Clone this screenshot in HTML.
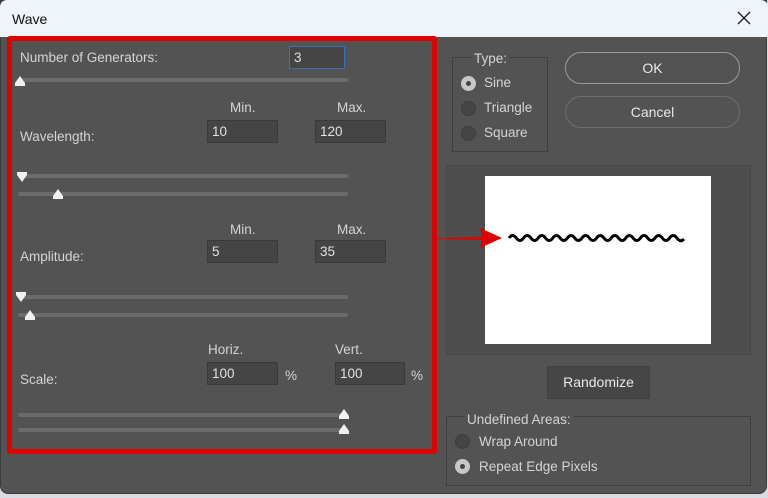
<!DOCTYPE html>
<html><head><meta charset="utf-8"><style>
*{margin:0;padding:0;box-sizing:border-box}
body{width:768px;height:498px;overflow:hidden;background:#d9dde2;font-family:"Liberation Sans",sans-serif;position:relative}
.win{position:absolute;left:0;top:0;width:767px;height:494px;background:#535353;border-radius:0 0 8px 8px;border:1px solid #3c3c3c}
.title{position:absolute;left:0;top:0;width:768px;height:37px;background:#eef4f9;border-radius:7px 7px 0 0}
.t{position:absolute;color:#d4d4d4;font-size:13.5px;white-space:nowrap;line-height:16px}
.in{position:absolute;height:23px;background:#454545;border:1px solid #3a3a3a;color:#e0e0e0;font-size:13.5px;padding:3px 0 0 4px}
.tr{position:absolute;left:18px;width:330px;height:4px;background:#6b6b6b;border-radius:2px}
.th{position:absolute;width:0;height:0}
.up{border-left:5px solid transparent;border-right:5px solid transparent;border-bottom:7px solid #f0f0f0}
.dn{border-left:5px solid transparent;border-right:5px solid transparent;border-top:7px solid #f0f0f0}
.thb{position:absolute;width:10px;height:3px;background:#f0f0f0}
.grp{position:absolute;border:1px solid #3f3f3f}
.rad{position:absolute;width:15px;height:15px;border-radius:50%;background:#454545;border:1px solid #3d3d3d}
.rad.on{background:#c8c8c8;border-color:#c8c8c8}
.rad.on::after{content:"";position:absolute;left:4px;top:4px;width:5px;height:5px;border-radius:50%;background:#444}
.btn{position:absolute;border:1px solid #9a9a9a;border-radius:16px;color:#e8e8e8;font-size:14px;text-align:center}
</style></head><body>
<div class="win"></div>
<div class="title"></div>
<div class="t" style="left:12px;top:11px;color:#111;font-size:14px">Wave</div>
<svg style="position:absolute;left:737px;top:11px" width="14" height="14"><path d="M1 1L13 13M13 1L1 13" stroke="#222" stroke-width="1.4"/></svg>
<div style="position:absolute;left:7px;top:36px;width:430px;height:418px;border:5px solid #e10000;border-radius:3px"></div>

<div class="t" style="left:20px;top:50px">Number of Generators:</div>
<div class="in" style="left:289px;top:46px;width:56px;border-color:#3a6fb0">3</div>
<div class="tr" style="top:78px"></div><div class="th up" style="left:15px;top:76px"></div><div class="thb" style="left:15px;top:83px"></div>

<div class="t" style="left:230px;top:100px">Min.</div><div class="t" style="left:337px;top:100px">Max.</div>
<div class="t" style="left:20px;top:129px">Wavelength:</div>
<div class="in" style="left:207px;top:120px;width:71px">10</div>
<div class="in" style="left:315px;top:120px;width:71px">120</div>
<div class="tr" style="top:174px"></div><div class="thb" style="left:17px;top:172px"></div><div class="th dn" style="left:17px;top:175px"></div>
<div class="tr" style="top:192px"></div><div class="th up" style="left:53px;top:189px"></div><div class="thb" style="left:53px;top:196px"></div>

<div class="t" style="left:230px;top:222px">Min.</div><div class="t" style="left:337px;top:222px">Max.</div>
<div class="t" style="left:20px;top:249px">Amplitude:</div>
<div class="in" style="left:207px;top:240px;width:71px">5</div>
<div class="in" style="left:315px;top:240px;width:71px">35</div>
<div class="tr" style="top:295px"></div><div class="thb" style="left:16px;top:292px"></div><div class="th dn" style="left:16px;top:295px"></div>
<div class="tr" style="top:313px"></div><div class="th up" style="left:25px;top:310px"></div><div class="thb" style="left:25px;top:317px"></div>

<div class="t" style="left:208px;top:342px">Horiz.</div><div class="t" style="left:335px;top:342px">Vert.</div>
<div class="t" style="left:20px;top:372px">Scale:</div>
<div class="in" style="left:207px;top:362px;width:71px">100</div><div class="t" style="left:285px;top:368px">%</div>
<div class="in" style="left:335px;top:362px;width:70px">100</div><div class="t" style="left:411px;top:368px">%</div>
<div class="tr" style="top:413px"></div><div class="th up" style="left:339px;top:409px"></div><div class="thb" style="left:339px;top:416px"></div>
<div class="tr" style="top:428px"></div><div class="th up" style="left:339px;top:424px"></div><div class="thb" style="left:339px;top:431px"></div>

<div class="grp" style="left:452px;top:57px;width:96px;height:95px"></div>
<div class="t" style="left:471px;top:51px;background:#535353;padding:0 3px">Type:</div>
<div class="rad on" style="left:461px;top:76px"></div><div class="t" style="left:484px;top:75px">Sine</div>
<div class="rad" style="left:461px;top:101px"></div><div class="t" style="left:484px;top:100px">Triangle</div>
<div class="rad" style="left:461px;top:126px"></div><div class="t" style="left:484px;top:125px">Square</div>

<div class="btn" style="left:565px;top:52px;width:175px;height:32px;line-height:30px">OK</div>
<div class="btn" style="left:565px;top:96px;width:175px;height:32px;line-height:30px;border-color:#6e6e6e">Cancel</div>

<div style="position:absolute;left:446px;top:165px;width:305px;height:190px;background:#4e4e4e;border:1px solid #474747"></div>
<div style="position:absolute;left:485px;top:176px;width:226px;height:168px;background:#fff"></div>
<svg style="position:absolute;left:430px;top:220px" width="270" height="40">
<path d="M7 18L52 17L50 8L72 18L50 28L52 20L7 19Z" fill="#e10000"/>
<path d="M79 18 q3.6 -5 7.3 0 t7.3 0 t7.3 0 t7.3 0 t7.3 0 t7.3 0 t7.3 0 t7.3 0 t7.3 0 t7.3 0 t7.3 0 t7.3 0 t7.3 0 t7.3 0 t7.3 0 t7.3 0 t7.3 0 t7.3 0 t7.3 0 t7.3 0 t7.3 0 t7.3 0 t7.3 0 t7 1" fill="none" stroke="#000" stroke-width="3"/>
</svg>

<div style="position:absolute;left:547px;top:366px;width:103px;height:33px;background:#464646;border:1px solid #404040;color:#e8e8e8;font-size:14px;text-align:center;line-height:31px">Randomize</div>

<div class="grp" style="left:446px;top:416px;width:305px;height:70px"></div>
<div class="t" style="left:464px;top:412px;background:#535353;padding:0 3px">Undefined Areas:</div>
<div class="rad" style="left:455px;top:434px"></div><div class="t" style="left:479px;top:434px">Wrap Around</div>
<div class="rad on" style="left:455px;top:459px"></div><div class="t" style="left:479px;top:459px">Repeat Edge Pixels</div>
</body></html>
